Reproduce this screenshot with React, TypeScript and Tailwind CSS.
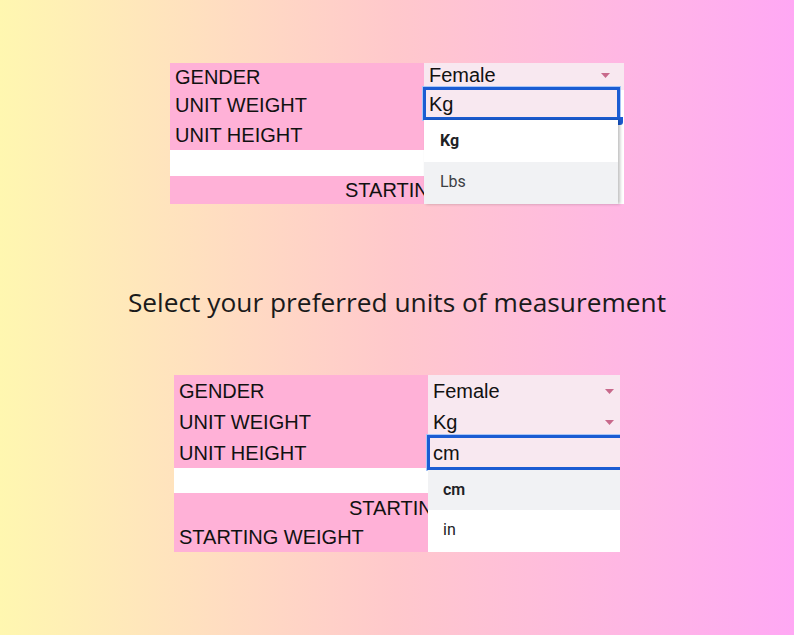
import React from "react";

const Caret = () => (
  <svg width="9" height="5" viewBox="0 0 9 5" className="shrink-0">
    <path d="M0 0h9L4.5 5z" fill="#c8698b" />
  </svg>
);

const cellFont = { fontFamily: '"Liberation Sans", Arial, sans-serif' };
const menuFont = { fontFamily: 'Roboto, "Liberation Sans", Arial, sans-serif' };

function Label({ h, children }: { h: string; children: React.ReactNode }) {
  return (
    <div className={`${h} bg-[#ffb1d7] flex items-center pl-[5px] text-[20px] text-[#111] whitespace-nowrap`}>
      {children}
    </div>
  );
}

export default function App() {
  return (
    <div className="w-[794px] h-[635px] overflow-hidden bg-linear-to-r from-[#fff7b0] via-[#ffc8cc] to-[#ffa8f4] pt-[63px]">
      {/* Top screenshot */}
      <div className="ml-[170px] flex w-[454px] h-[141px]" style={cellFont}>
        <div className="w-[254px] flex flex-col">
          <Label h="h-[27px]">GENDER</Label>
          <Label h="h-[30px]">UNIT WEIGHT</Label>
          <Label h="h-[30px]">UNIT HEIGHT</Label>
          <div className="h-[26px] bg-white" />
          <div className="h-[28px] bg-[#ffb1d7] flex items-center pl-[175px] text-[20px] text-[#111] whitespace-nowrap overflow-hidden">
            STARTING WEIGHT
          </div>
        </div>
        <div className="relative w-[200px] flex flex-col">
          <div className="h-[27px] bg-[#f8e8f0] flex items-start pt-[1px] justify-between pl-[5px] pr-[14px] text-[20px] text-[#111]">
            <span className="leading-[22px]">Female</span>
            <span className="mt-[9px]"><Caret /></span>
          </div>
          <div className="flex-1 bg-white" />
          {/* editor */}
          <div className="absolute left-[-1px] top-[24px] w-[197px] h-[33px] border-[3px] border-[#1b5cd3] bg-[#f8e8f0] shadow-[0_0_0_1px_#a9c6f7] flex items-center pl-[3px] text-[20px] text-[#111]">
            Kg
          </div>
          <div className="absolute left-[194px] top-[54px] w-[5px] h-[8px] bg-[#1b5cd3] rounded-br-[3px]" />
          {/* menu */}
          <div className="absolute left-0 top-[57px] w-[194px] bottom-0 bg-white shadow-[2px_0_3px_rgba(0,0,0,0.25)] flex flex-col" style={menuFont}>
            <div className="h-[42px] flex items-center pl-[16px] text-[16px] font-bold text-[#202124]">Kg</div>
            <div className="flex-1 bg-[#f1f2f4] flex items-center pb-[3px] pl-[16px] text-[16px] text-[#3c4043]">Lbs</div>
          </div>
        </div>
      </div>

      {/* Heading */}
      <div
        className="mt-[80px] h-[36px] leading-[36px] text-center text-[26.3px] text-[#1a1a1a]"
        style={{ fontFamily: '"Open Sans", sans-serif' }}
      >
        Select your preferred units of measurement
      </div>

      {/* Bottom screenshot */}
      <div className="ml-[174px] mt-[55px] flex w-[446px] h-[177px] overflow-hidden" style={cellFont}>
        <div className="w-[254px] flex flex-col">
          <Label h="h-[32px]">GENDER</Label>
          <Label h="h-[30px]">UNIT WEIGHT</Label>
          <Label h="h-[31px]">UNIT HEIGHT</Label>
          <div className="h-[25px] bg-white" />
          <div className="h-[29px] bg-[#ffb1d7] flex items-center pl-[175px] text-[20px] text-[#111] whitespace-nowrap overflow-hidden">
            STARTING WEIGHT
          </div>
          <Label h="h-[30px]">STARTING WEIGHT</Label>
        </div>
        <div className="relative w-[192px] flex flex-col">
          <div className="h-[32px] bg-[#f8e8f0] flex items-center justify-between pl-[5px] pr-[6px] text-[20px] text-[#111]">
            <span>Female</span>
            <Caret />
          </div>
          <div className="h-[30px] bg-[#f8e8f0] flex items-center justify-between pl-[5px] pr-[6px] text-[20px] text-[#111]">
            <span>Kg</span>
            <Caret />
          </div>
          <div className="flex-1 bg-white" />
          {/* editor */}
          <div className="absolute left-[-1px] top-[60px] w-[210px] h-[35px] border-[3px] border-[#1b5cd3] bg-[#f8e8f0] shadow-[0_0_0_1px_#a9c6f7] flex items-center pl-[3px] text-[20px] text-[#111]">
            cm
          </div>
          {/* menu */}
          <div className="absolute left-0 top-[95px] w-[192px] bottom-0 bg-white flex flex-col" style={menuFont}>
            <div className="h-[40px] bg-[#f1f2f4] flex items-center pl-[15px] text-[16px] font-semibold text-[#202124]">cm</div>
            <div className="flex-1 flex items-center pb-[3px] pl-[15px] text-[16px] text-[#202124]">in</div>
          </div>
        </div>
      </div>
    </div>
  );
}
